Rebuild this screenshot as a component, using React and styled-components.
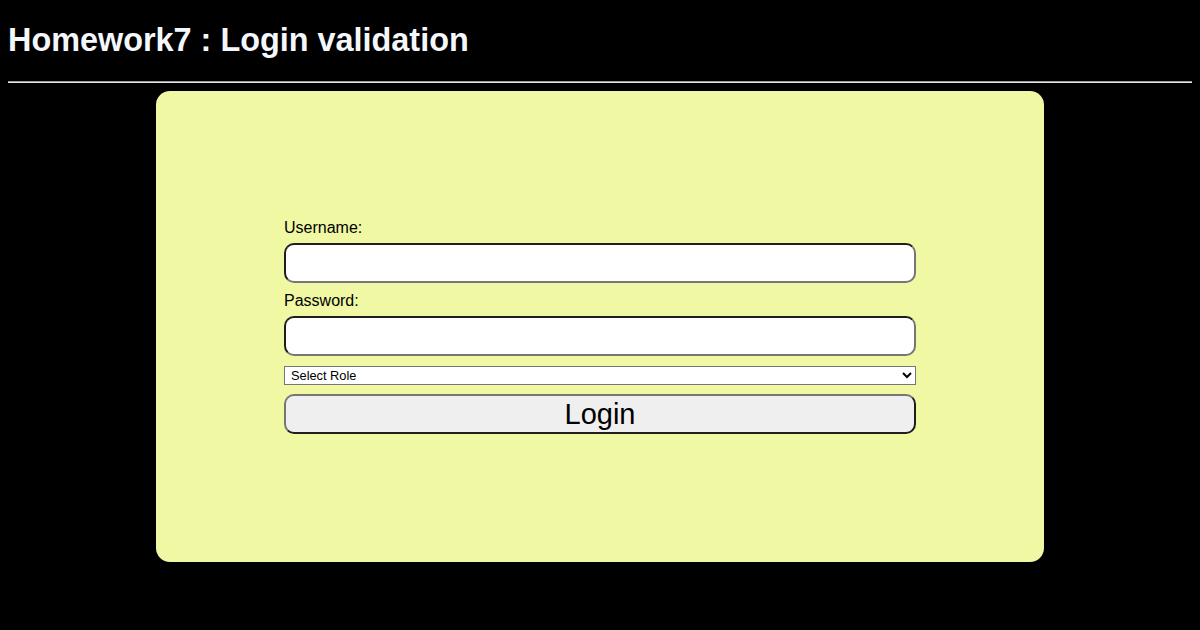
import React from 'react';
import styled, { createGlobalStyle } from 'styled-components';

const GlobalStyle = createGlobalStyle`
  html, body {
    background: #000;
  }
  body {
    margin: 8px;
    font-family: "Liberation Sans", Arial, sans-serif;
  }
`

const Title = styled.h1`
  margin: 14px 0 22px;
  color: #f4f8fc;
  font-size: 32.4px;
  font-weight: bold;
  line-height: 37px;
`

const Rule = styled.hr`
  margin: 0 0 8px;
  height: 0;
  border: none;
  border-top: 1px solid #9a9a9a;
  border-bottom: 1px solid #e6e6e6;
`

const Card = styled.div`
  width: 75%;
  height: 471px;
  margin: 0 auto;
  box-sizing: border-box;
  background: #f0f8a4;
  border-radius: 14px;
  display: flex;
  align-items: center;
  justify-content: center;
`

const Form = styled.form`
  width: 632px;
  display: flex;
  flex-direction: column;
`

const Label = styled.label`
  font-size: 16px;
  line-height: 18px;
  color: #000;
  margin-bottom: 6px;
`

const Input = styled.input`
  box-sizing: border-box;
  width: 100%;
  height: 40px;
  margin: 0 0 ${({ last }) => (last ? '10px' : '9px')};
  padding: 0 10px;
  background: #fff;
  border-width: 2px;
  border-style: solid;
  border-color: #1e1e1e #767676 #767676 #1e1e1e;
  border-radius: 10px;
  font-size: 16px;
  font-family: "Liberation Sans", Arial, sans-serif;
  outline: none;
`

const Select = styled.select`
  box-sizing: border-box;
  width: 100%;
  height: 19px;
  margin: 0 0 9px;
  padding: 0 2px;
  font-size: 12.8px;
  font-family: "Liberation Sans", Arial, sans-serif;
  background: #fff;
  color: #000;
  border: 1px solid #767676;
  border-radius: 0;
`

const Button = styled.button`
  box-sizing: border-box;
  width: 100%;
  height: 40px;
  padding: 0;
  background: #efefef;
  border-width: 2px;
  border-style: solid;
  border-color: #767676 #1e1e1e #1e1e1e #767676;
  border-radius: 10px;
  color: #000;
  font-size: 29px;
  font-family: "Liberation Sans", Arial, sans-serif;
  line-height: 36px;
`

const App = () => (
  <>
    <GlobalStyle />
    <Title>Homework7 : Login validation</Title>
    <Rule />
    <Card>
      <Form onSubmit={e => e.preventDefault()}>
        <Label htmlFor="username">Username:</Label>
        <Input id="username" type="text" />
        <Label htmlFor="password">Password:</Label>
        <Input id="password" type="password" last />
        <Select defaultValue="">
          <option value="">Select Role</option>
          <option value="admin">Admin</option>
          <option value="user">User</option>
        </Select>
        <Button type="submit">Login</Button>
      </Form>
    </Card>
  </>
);

export default App;
